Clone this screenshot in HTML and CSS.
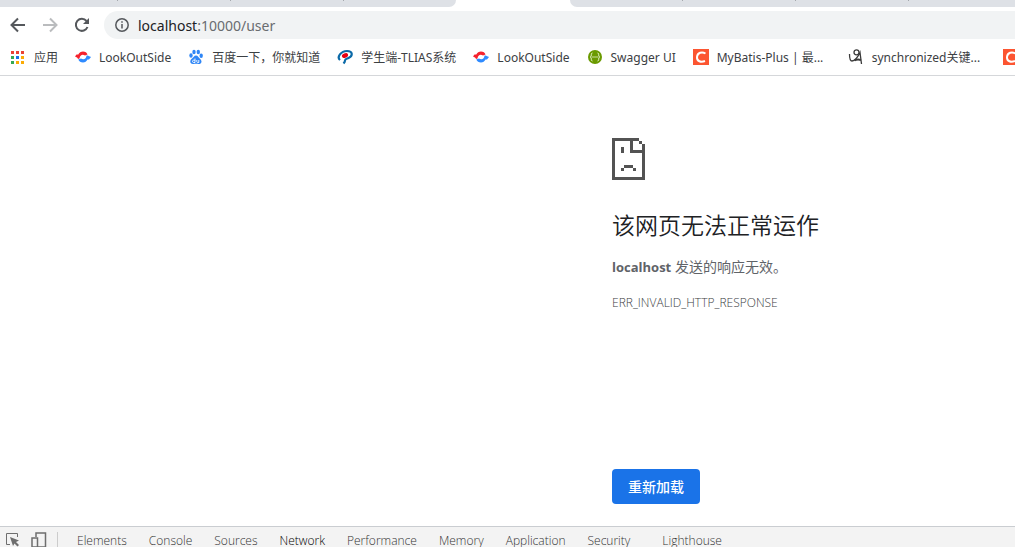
FILE: index.html
```html
<!DOCTYPE html>
<html lang="zh-CN">
<head>
    <meta charset="UTF-8">
    <meta name="viewport" content="width=device-width, initial-scale=1.0">
    <title>localhost</title>
    <link rel="stylesheet" href="styles.css">
</head>
<body>
    <!-- shared icons -->
    <svg class="symbols" aria-hidden="true">
        <symbol id="look" viewBox="0 0 16 16">
            <path fill="#2f8bff" d="M12.500 6.500c1 .2 2 1 3.500 1.500L14 10.500h-1.500c-1 2-2.500 3-4.500 3-2.200 0-4-1-4.700-3L6 9.500c2.500 1.500 5.500.5 5.500-3z"/>
            <path fill="#f5222d" d="M0 7.500l1.500-2H3.300C4.200 3.500 6 2.500 8 2.500c2.200 0 4 1 4.500 3L10 6.500C7.500 5 5 6 4.500 9.500L3 10C2.500 8.500 1.500 8.500 0 7.500z"/>
            <path fill="#fff" d="M6 8.800c0-1.500 1-2.500 2.500-2.300l1.500.7c0 1.500-1 2.500-2.500 2.300z"/>
        </symbol>
        <symbol id="csdn" viewBox="0 0 16 16">
            <path fill="#fc5531" d="M0 0h16v16H0z"/>
            <path fill="none" stroke="#fff" stroke-width="2" d="M12.500 4.500C9 2.500 4.500 3.500 4 8c-.3 4.500 4 5.500 8 4"/>
        </symbol>
    </svg>

    <div class="tab-strip">
        <div class="tabs tabs-left"><i></i><i></i><i></i><i></i></div>
        <div class="tab-active"></div>
        <div class="tabs tabs-right"><i></i><i></i><i></i><i></i></div>
    </div>

    <div class="toolbar">
        <button class="nav-button" aria-label="后退">
            <svg width="16" height="16" viewBox="0 0 16 16"><path d="M15 8H2M8 1.500L1.500 8 8 14.500"/></svg>
        </button>
        <button class="nav-button disabled" aria-label="前进" disabled>
            <svg width="16" height="16" viewBox="0 0 16 16"><path d="M1 8h13M8 1.500L14.500 8 8 14.500"/></svg>
        </button>
        <button class="nav-button" aria-label="刷新">
            <svg width="16" height="16" viewBox="0 0 16 16"><path d="M13.500 10A6 6 0 1 1 12.500 4"/><path class="solid" d="M15 1v6H9z"/></svg>
        </button>
        <div class="address-bar">
            <svg width="16" height="16" viewBox="0 0 16 16"><circle cx="8" cy="8" r="6.200"/><path d="M8 7v4.500M8 4.200v1.600"/></svg>
            <a class="url" href="#"><span class="host">localhost</span>:10000/user</a>
        </div>
    </div>

    <nav class="bookmarks">
        <a href="#" class="bookmark">
            <svg viewBox="0 0 16 16"><path fill="#ea4335" d="M1 2h3v3H1zM6 2h3v3H6zM11 2h3v3h-3z"/><path fill="#34a853" d="M1 7h3v3H1zM1 12h3v3H1z"/><path fill="#1a73e8" d="M6 7h3v3H6z"/><path fill="#fbab05" d="M11 7h3v3h-3zM6 12h3v3H6zM11 12h3v3h-3z"/></svg>
            <span>应用</span>
        </a>
        <a href="#" class="bookmark"><svg><use href="#look"/></svg><span>LookOutSide</span></a>
        <a href="#" class="bookmark">
            <svg viewBox="0 0 16 16"><g fill="#2f86f6"><ellipse cx="3" cy="6.500" rx="1.700" ry="2.200"/><ellipse cx="6" cy="3" rx="1.700" ry="2.300"/><ellipse cx="10.300" cy="3" rx="1.700" ry="2.300"/><ellipse cx="13.200" cy="6.700" rx="1.700" ry="2.200"/><path d="M8 6.500c2 0 2.500 2 4 3.300 3 2.700 1 5.700-1.500 5.200-2-.4-3-.4-5 0-3 .5-4.500-3-1.800-5.200C5.500 8.500 6 6.500 8 6.500z"/></g><path fill="none" stroke="#fff" stroke-width=".9" d="M7 9.500v4H5.500c-1.300 0-1.300-2.300 0-2.300H7M8.800 11v1.500c0 1 .5 1 2 1V11"/></svg>
            <span>百度一下，你就知道</span>
        </a>
        <a href="#" class="bookmark">
            <svg viewBox="0 0 16 16"><path fill="none" stroke="#0b6aa8" stroke-width="2.200" d="M3 11C-.5 8 4 2 10 2c6 0 6 5 1.500 7-2 .9-3.500 1-3.500 2.500 0 1-.5 2-1.500 3"/><ellipse cx="8" cy="6.500" rx="3.200" ry="2.200" transform="rotate(-25 8 6.500)" fill="#e60012"/></svg>
            <span>学生端-TLIAS系统</span>
        </a>
        <a href="#" class="bookmark"><svg><use href="#look"/></svg><span>LookOutSide</span></a>
        <a href="#" class="bookmark">
            <svg viewBox="0 0 16 16"><circle cx="8" cy="8" r="7" fill="#6a9a00"/><path fill="none" stroke="#e8f5d0" d="M5.500 4C3.500 4 5 7 3.500 8 5 9 3.500 12 5.500 12M10.500 4c2 0 .5 3 2 4-1.500 1 0 4-2 4"/><path stroke="#e8f5d0" stroke-width="1.500" stroke-dasharray="1 1" d="M5.500 8h5"/></svg>
            <span>Swagger UI</span>
        </a>
        <a href="#" class="bookmark long"><svg><use href="#csdn"/></svg><span>MyBatis-Plus | 最...</span></a>
        <a href="#" class="bookmark long">
            <svg viewBox="0 0 16 16"><g fill="none" stroke="#3b3b3b"><circle cx="8.500" cy="3.300" r="2.500" stroke-width="1.300"/><path stroke-width="1.300" d="M1.500 5c0 4 .5 7 2.500 7 2.500 0 6-4 8-8.500l1.500 11.500"/><path stroke-width="2" d="M6.500 11.500c2-1.200 4-1.200 6.500-.5"/></g></svg>
            <span>synchronized关键...</span>
        </a>
        <a href="#" class="bookmark" aria-label="CSDN"><svg><use href="#csdn"/></svg></a>
    </nav>

    <main class="error-page">
        <svg class="sad-page" width="33" height="42" viewBox="0 0 33 42" shape-rendering="crispEdges" fill="#535353">
            <path d="M0 0h27v3H3v36h27V15H18V3h3v9h9V6h3v36H0z"/>
            <path d="M27 3h3v3h-3zM9 9h3v6H9zM12 27h9v3h-9zM9 30h3v3H9zM21 30h3v3h-3z"/>
        </svg>
        <h1>该网页无法正常运作</h1>
        <p class="message"><strong>localhost</strong> 发送的响应无效。</p>
        <p class="error-code">ERR_INVALID_HTTP_RESPONSE</p>
        <button class="reload">重新加载</button>
    </main>

    <div class="devtools">
        <button class="tool" aria-label="Inspect">
            <svg width="16" height="16" viewBox="0 0 16 16"><path fill="none" stroke="#6e6e6e" d="M5 12.500H1.500v-11h11V5"/><path fill="#6e6e6e" d="M5 5l9 3.500-3 1.500 3 3-1.500 1.500-3-3L8 14z"/></svg>
        </button>
        <button class="tool" aria-label="Device">
            <svg width="16" height="16" viewBox="0 0 16 16"><path fill="none" stroke="#6e6e6e" stroke-width="1.500" d="M5 5V1h9.500v14H7M1 6h5.500v9H1z"/></svg>
        </button>
        <div class="devtools-tabs">
            <button>Elements</button>
            <button>Console</button>
            <button>Sources</button>
            <button class="selected">Network</button>
            <button>Performance</button>
            <button>Memory</button>
            <button>Application</button>
            <button class="security">Security</button>
            <button>Lighthouse</button>
        </div>
    </div>
</body>
</html>
```
FILE: styles.css
```css
* {
    box-sizing: border-box;
}
body {
    margin: 0;
    height: 100vh;
    display: flex;
    flex-direction: column;
    overflow: hidden;
    background: white;
    font-family: "Open Sans", "Noto Sans CJK SC", sans-serif;
    font-size: 12px;
}
button {
    border: none;
    background: none;
    padding: 0;
    font: inherit;
    cursor: pointer;
}
a {
    color: inherit;
    text-decoration: none;
}
svg {
    flex: none;
}
.symbols {
    position: absolute;
    width: 0;
    height: 0;
}

/* bottom edge of the tabs */
.tab-strip {
    flex: none;
    display: flex;
    height: 7px;
}
.tabs {
    display: flex;
    background: #dee1e6;
    overflow: hidden;
}
.tabs-left {
    flex: 456;
    border-bottom-right-radius: 7px;
}
.tab-active {
    flex: 114;
}
.tabs-right {
    flex: 445;
    border-bottom-left-radius: 7px;
}
.tabs i {
    flex: none;
    width: 113px;
    height: 1px;
    border-right: 1px solid #a5a8ad;
}
.tabs-left i:first-child {
    width: 118px;
}

.toolbar {
    flex: none;
    display: flex;
    align-items: center;
    gap: 16px;
    height: 36px;
    padding-left: 10px;
}
.nav-button {
    display: flex;
}
.nav-button svg,
.address-bar svg {
    fill: none;
    stroke: #55585c;
    stroke-width: 2;
}
.nav-button .solid {
    fill: #55585c;
    stroke: none;
}
.nav-button.disabled svg {
    stroke: #babcbe;
}
.address-bar {
    flex: 1;
    display: flex;
    align-items: center;
    gap: 8px;
    height: 28px;
    margin-left: -2px;
    padding-left: 10px;
    background: #f1f3f4;
    border-radius: 14px 0 0 14px;
}
.address-bar svg {
    stroke-width: 1.5;
}
.url {
    color: #696c70;
    font-family: "Noto Sans", sans-serif;
    font-size: 14px;
}
.host {
    color: #202124;
}

.bookmarks {
    flex: none;
    display: flex;
    align-items: center;
    gap: 17px;
    height: 33px;
    padding: 0 0 4px 10px;
    border-bottom: 1px solid #d5d7da;
    overflow: hidden;
    font-family: "Noto Sans", "Noto Sans CJK SC", sans-serif;
}
.bookmark {
    flex: none;
    display: flex;
    align-items: center;
    gap: 8px;
    height: 20px;
    color: #3c4043;
    white-space: nowrap;
}
.bookmark svg {
    width: 16px;
    height: 16px;
}
.bookmark.long span {
    width: 114px;
}

.error-page {
    flex: 1;
    min-height: 0;
    display: flex;
    flex-direction: column;
    align-items: flex-start;
    padding-top: 62px;
    padding-left: 60.3%;
    color: #5f6368;
}
h1 {
    margin: 29px 0 0;
    color: #202124;
    font-size: 23px;
    font-weight: 350;
    line-height: 32px;
}
.message {
    margin: 14px 0 0;
    font-size: 14px;
    line-height: 24px;
}
.message strong {
    font-size: 13px;
}
.error-code {
    margin: 14px 0 0;
    color: #3c4043;
    font-weight: 300;
    line-height: 20px;
}
.reload {
    margin-top: 156px;
    padding: 0 16px 2px;
    height: 35px;
    border-radius: 4px;
    background: #1a73e8;
    color: white;
    font-size: 14px;
    font-weight: 500;
}

.devtools {
    flex: none;
    display: flex;
    align-items: flex-start;
    height: 21px;
    padding-left: 5px;
    background: #f3f3f3;
    border-top: 1px solid #cacdd1;
}
.tool {
    width: 26px;
    margin-top: 5px;
    text-align: left;
}
.devtools-tabs {
    display: flex;
    gap: 22px;
    margin-top: 5px;
    padding-left: 19px;
    border-left: 1px solid #ccc;
}
.devtools-tabs button {
    color: #333;
    font-weight: 300;
    line-height: 18px;
}
.devtools-tabs .selected {
    color: #000;
}
.devtools-tabs .security {
    margin-right: 10px;
}
```
